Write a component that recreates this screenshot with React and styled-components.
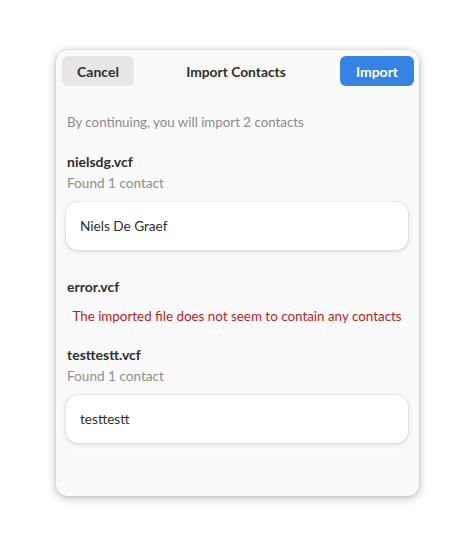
import React from 'react'
import styled, { createGlobalStyle } from 'styled-components'

const GlobalStyle = createGlobalStyle`
  body {
    margin: 0;
    background: #ffffff;
    font-family: Lato, "Open Sans", sans-serif;
  }
`

const files = [
    { id: 1, name: 'nielsdg.vcf', found: 'Found 1 contact', contacts: ['Niels De Graef'] },
    { id: 2, name: 'error.vcf', error: 'The imported file does not seem to contain any contacts' },
    { id: 3, name: 'testtestt.vcf', found: 'Found 1 contact', contacts: ['testtestt'] },
]

const App = () => {
    return (
        <>
            <GlobalStyle />
            <Page>
                <Dialog>
                    <HeaderBar>
                        <Button>Cancel</Button>
                        <Title>Import Contacts</Title>
                        <Button primary>Import</Button>
                    </HeaderBar>
                    <Body>
                        <Intro>By continuing, you will import 2 contacts</Intro>
                        {files.map((file) => (
                            <FileGroup key={file.id}>
                                <FileName>{file.name}</FileName>
                                {file.found && <Found>{file.found}</Found>}
                                {file.error && <ErrorText>{file.error}</ErrorText>}
                                {file.contacts && (
                                    <Card>
                                        {file.contacts.map((c) => (
                                            <Row key={c}>{c}</Row>
                                        ))}
                                    </Card>
                                )}
                            </FileGroup>
                        ))}
                    </Body>
                </Dialog>
            </Page>
        </>
    )
}

const Page = styled.div`
    width: 474px;
    height: 557px;
    padding: 50px 0 0 56px;
    box-sizing: border-box;
`

const Dialog = styled.div`
    width: 363px;
    height: 446px;
    background: #fafafa;
    border-radius: 12px;
    box-shadow: 0 2px 10px rgba(0, 0, 0, 0.28), 0 0 0 1px rgba(0, 0, 0, 0.04);
    box-sizing: border-box;
    overflow: hidden;
`

const HeaderBar = styled.div`
    display: flex;
    align-items: center;
    justify-content: space-between;
    padding: 6px 5px 0 6px;
`

const Title = styled.div`
    font-size: 13.8px;
    font-weight: 700;
    color: #2e2e2e;
    margin-right: 2px;
`

const Button = styled.div`
    height: 30px;
    width: ${(p) => (p.primary ? '74px' : '72px')};
    display: flex;
    align-items: center;
    justify-content: center;
    border-radius: 6px;
    font-size: 14px;
    font-weight: 700;
    background: ${(p) => (p.primary ? '#3584e4' : '#e6e6e6')};
    color: ${(p) => (p.primary ? '#ffffff' : '#2e2e2e')};
`

const Body = styled.div`
    padding: 27px 11px 0 10px;
    display: flex;
    flex-direction: column;
`

const Intro = styled.div`
    font-size: 13.3px;
    color: #8a8a8a;
    padding-left: 1px;
    line-height: 18px;
    margin-bottom: 21px;
`

const FileGroup = styled.div`
    display: flex;
    flex-direction: column;
    margin-bottom: 27px;
    &:nth-child(3) { margin-bottom: 19px; }
`

const FileName = styled.div`
    font-size: 14px;
    font-weight: 700;
    color: #2e2e2e;
    padding-left: 1px;
    line-height: 20px;
`

const Found = styled.div`
    font-size: 13.6px;
    color: #8e8e8e;
    padding-left: 1px;
    line-height: 20px;
    margin-top: 1px;
`

const ErrorText = styled.div`
    font-size: 13.4px;
    color: #c01c28;
    text-align: center;
    line-height: 20px;
    margin-top: 9px;
    white-space: nowrap;
`

const Card = styled.div`
    margin-top: 9px;
    background: #ffffff;
    border-radius: 12px;
    box-shadow: 0 0 0 1px rgba(0, 0, 0, 0.03), 0 1px 3px 1px rgba(0, 0, 0, 0.07), 0 2px 6px 2px rgba(0, 0, 0, 0.03);
`

const Row = styled.div`
    height: 48px;
    display: flex;
    align-items: center;
    padding: 0 14px;
    font-size: 13.6px;
    color: #2e2e2e;
`

export default App
